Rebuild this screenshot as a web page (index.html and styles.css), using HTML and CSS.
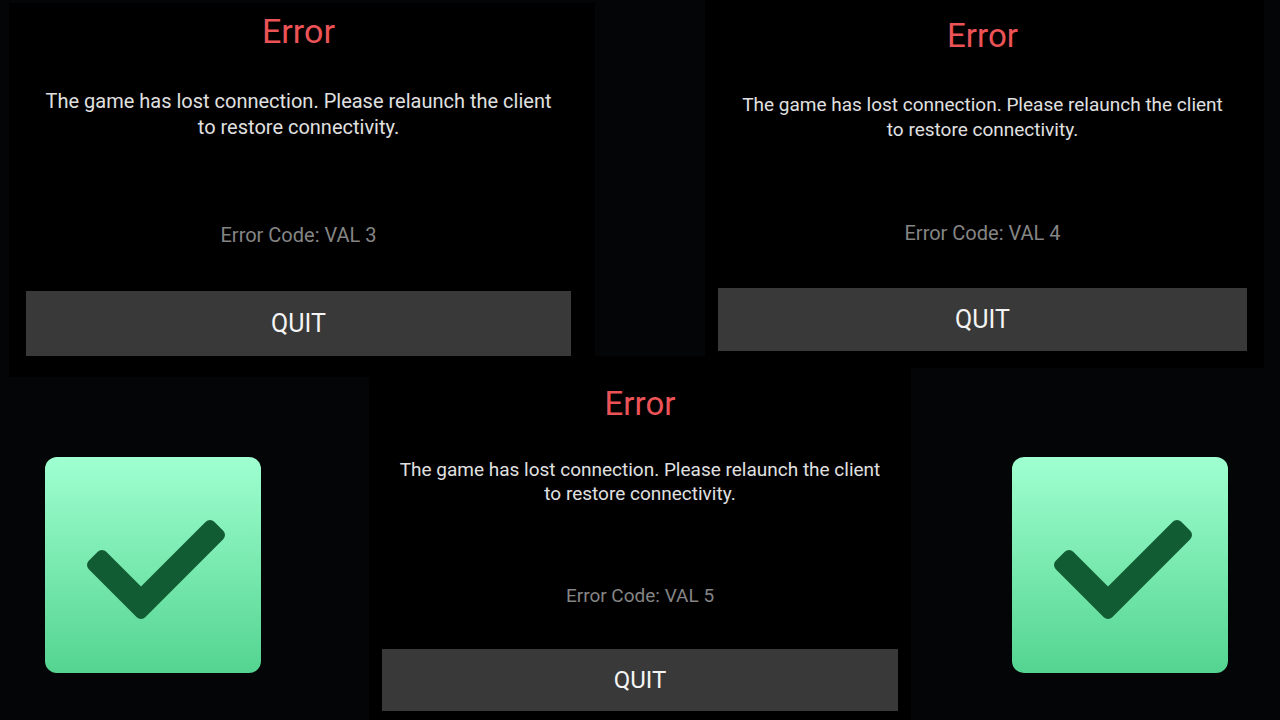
FILE: index.html
```html
<!DOCTYPE html>
<html lang="en">
<head>
<meta charset="utf-8">
<meta name="viewport" content="width=device-width, initial-scale=1">
<title>Error codes VAL 3, VAL 4, VAL 5</title>
<link rel="stylesheet" href="styles.css">
</head>
<body>
<main class="board">
  <div class="row row-top">
    <section class="dialog dialog-large">
      <h2 class="title">Error</h2>
      <p class="message">The game has lost connection. Please relaunch the client<br>to restore connectivity.</p>
      <p class="code">Error Code: VAL 3</p>
      <button class="quit" type="button">QUIT</button>
    </section>
    <section class="dialog dialog-medium">
      <h2 class="title">Error</h2>
      <p class="message">The game has lost connection. Please relaunch the client<br>to restore connectivity.</p>
      <p class="code">Error Code: VAL 4</p>
      <button class="quit" type="button">QUIT</button>
    </section>
  </div>
  <div class="row row-bottom">
    <div class="badge-cell badge-start">
      <svg class="badge" viewBox="0 0 216 216" role="img" aria-label="Fixed"><path d="M48 108L57 99L96 138L165 69L174 78L96 156Z"/></svg>
    </div>
    <section class="dialog dialog-small">
      <h2 class="title">Error</h2>
      <p class="message">The game has lost connection. Please relaunch the client<br>to restore connectivity.</p>
      <p class="code">Error Code: VAL 5</p>
      <button class="quit" type="button">QUIT</button>
    </section>
    <div class="badge-cell badge-end">
      <svg class="badge" viewBox="0 0 216 216" role="img" aria-label="Fixed"><path d="M48 108L57 99L96 138L165 69L174 78L96 156Z"/></svg>
    </div>
  </div>
</main>
</body>
</html>
```
FILE: styles.css
```css
* { box-sizing: border-box; }
body {
  margin: 0;
  background: #040507;
  color: #e0e0e0;
  font-family: Roboto, "Liberation Sans", sans-serif;
}
.board { min-height: 100vh; }
.row { display: grid; }
.row-top {
  grid-template-columns: 586fr 559fr;
  column-gap: 110px;
  align-items: start;
  padding: 0 16px 0 9px;
}
.row-bottom {
  grid-template-columns: 369fr 542fr 369fr;
  margin-top: -21px;
}
.dialog {
  display: flex;
  flex-direction: column;
  background: #000;
  text-align: center;
}
.dialog-large { margin-top: 3px; padding: 8px 24px 21px 17px; }
.dialog-medium { padding: 16px 17px 17px 13px; }
.dialog-small { padding: 28px 13px 9px; }
.title {
  margin: 0;
  color: #ec5357;
  font-size: 33px;
  font-weight: 400;
  line-height: 40px;
}
.message { margin: 0; font-size: 19px; white-space: nowrap; }
.code { margin: 0; color: #858585; font-size: 20px; line-height: 24px; }
.quit {
  border: 0;
  padding: 0;
  background: #393939;
  color: #f4f4f4;
  font-family: inherit;
  font-size: 25px;
}
.dialog-large .title { font-size: 34px; }
.dialog-large .message { margin: 37px 0 83px; font-size: 20px; line-height: 26px; }
.dialog-large .code { margin-bottom: 44px; }
.dialog-large .quit { height: 65px; }
.dialog-medium .message { margin: 36px 0 79px; line-height: 25px; }
.dialog-medium .code { margin-bottom: 43px; }
.dialog-medium .quit { height: 63px; }
.dialog-small .message { margin: 34px 0 78px; line-height: 24px; }
.dialog-small .code { margin-bottom: 41px; font-size: 19px; }
.dialog-small .quit { height: 62px; font-size: 24px; }
.badge-cell { display: flex; padding-top: 101px; }
.badge-start { padding-left: 45px; }
.badge-end { justify-content: flex-end; padding-right: 52px; }
.badge {
  width: 216px;
  height: 216px;
  border-radius: 12px;
  background: linear-gradient(#9fffd0, #54d490);
}
.badge path {
  fill: #125c34;
  stroke: #125c34;
  stroke-width: 12;
  stroke-linejoin: round;
}
```
